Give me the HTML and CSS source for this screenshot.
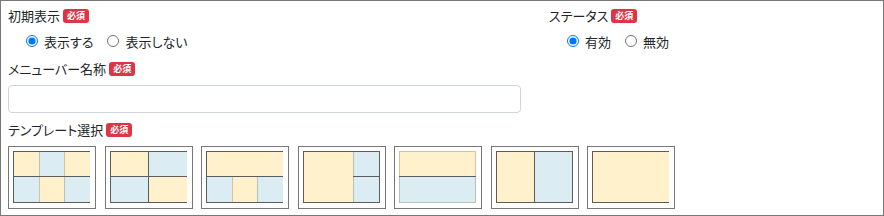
FILE: index.html
```html
<!DOCTYPE html>
<html>
<head>
    <title>メニュー設定</title>
    <link rel="stylesheet" href="styles.css">
</head>
<body>
    <div class="panel">
        <div class="top-row">
            <!-- 初期表示 -->
            <div class="field">
                <div class="label">初期表示<span class="badge">必須</span></div>
                <div class="radios">
                    <label><input type="radio" name="display" checked>表示する</label>
                    <label><input type="radio" name="display">表示しない</label>
                </div>
            </div>
            <!-- ステータス -->
            <div class="field">
                <div class="label">ステータス<span class="badge">必須</span></div>
                <div class="radios">
                    <label><input type="radio" name="status" checked>有効</label>
                    <label><input type="radio" name="status">無効</label>
                </div>
            </div>
        </div>

        <div class="label menu-label">メニューバー名称<span class="badge">必須</span></div>
        <input type="text" class="name-input">

        <div class="label template-label">テンプレート選択<span class="badge">必須</span></div>
        <div class="templates">
            <div class="template">
                <svg width="77" height="52" viewBox="0 0 77 52" shape-rendering="crispEdges">
                    <rect x="0" y="0" width="26" height="25" fill="#fff1cc"/>
                    <rect x="26" y="0" width="25" height="25" fill="#dbedf3"/>
                    <rect x="51" y="0" width="26" height="25" fill="#fff1cc"/>
                    <rect x="0" y="25" width="26" height="27" fill="#dbedf3"/>
                    <rect x="26" y="25" width="25" height="27" fill="#fff1cc"/>
                    <rect x="51" y="25" width="26" height="27" fill="#dbedf3"/>
                    <line x1="26.5" y1="0" x2="26.5" y2="52" class="soft"/>
                    <line x1="51.5" y1="0" x2="51.5" y2="52" class="soft"/>
                    <line x1="0" y1="25.5" x2="77" y2="25.5" class="hard"/>
                    <polyline points="77,0.5 0.5,0.5 0.5,51.5 77,51.5" class="hard"/>
                </svg>
            </div>
            <div class="template">
                <svg width="77" height="52" viewBox="0 0 77 52" shape-rendering="crispEdges">
                    <rect x="0" y="0" width="38" height="25" fill="#fff1cc"/>
                    <rect x="38" y="0" width="39" height="25" fill="#dbedf3"/>
                    <rect x="0" y="25" width="38" height="27" fill="#dbedf3"/>
                    <rect x="38" y="25" width="39" height="27" fill="#fff1cc"/>
                    <line x1="38.5" y1="0" x2="38.5" y2="52" class="hard"/>
                    <line x1="0" y1="25.5" x2="77" y2="25.5" class="hard"/>
                    <polyline points="77,0.5 0.5,0.5 0.5,51.5 77,51.5" class="hard"/>
                </svg>
            </div>
            <div class="template">
                <svg width="77" height="52" viewBox="0 0 77 52" shape-rendering="crispEdges">
                    <rect x="0" y="0" width="77" height="25" fill="#fff1cc"/>
                    <rect x="0" y="25" width="26" height="27" fill="#dbedf3"/>
                    <rect x="26" y="25" width="25" height="27" fill="#fff1cc"/>
                    <rect x="51" y="25" width="26" height="27" fill="#dbedf3"/>
                    <line x1="26.5" y1="25" x2="26.5" y2="52" class="soft"/>
                    <line x1="51.5" y1="25" x2="51.5" y2="52" class="soft"/>
                    <line x1="0" y1="25.5" x2="77" y2="25.5" class="hard"/>
                    <polyline points="77,0.5 0.5,0.5 0.5,51.5 77,51.5" class="hard"/>
                </svg>
            </div>
            <div class="template">
                <svg width="77" height="52" viewBox="0 0 77 52" shape-rendering="crispEdges">
                    <rect x="0" y="0" width="50" height="52" fill="#fff1cc"/>
                    <rect x="50" y="0" width="27" height="52" fill="#dbedf3"/>
                    <line x1="50.5" y1="0" x2="50.5" y2="52" class="soft"/>
                    <line x1="50" y1="25.5" x2="77" y2="25.5" class="hard"/>
                    <rect x="0.5" y="0.5" width="76" height="51" class="hard" fill="none"/>
                </svg>
            </div>
            <div class="template">
                <svg width="77" height="52" viewBox="0 0 77 52" shape-rendering="crispEdges">
                    <rect x="0" y="0" width="77" height="25" fill="#fff1cc"/>
                    <rect x="0" y="25" width="77" height="27" fill="#dbedf3"/>
                    <line x1="0" y1="25.5" x2="77" y2="25.5" class="hard"/>
                    <rect x="0.5" y="0.5" width="76" height="51" class="soft" fill="none"/>
                </svg>
            </div>
            <div class="template">
                <svg width="77" height="52" viewBox="0 0 77 52" shape-rendering="crispEdges">
                    <rect x="0" y="0" width="38" height="52" fill="#fff1cc"/>
                    <rect x="38" y="0" width="39" height="52" fill="#dbedf3"/>
                    <line x1="38.5" y1="0" x2="38.5" y2="52" class="hard"/>
                    <rect x="0.5" y="0.5" width="76" height="51" class="hard" fill="none"/>
                </svg>
            </div>
            <div class="template">
                <svg width="77" height="52" viewBox="0 0 77 52" shape-rendering="crispEdges">
                    <rect x="0" y="0" width="77" height="52" fill="#fff1cc"/>
                    <polyline points="77,0.5 0.5,0.5 0.5,51.5 77,51.5" class="hard"/>
                </svg>
            </div>
        </div>
    </div>
</body>
</html>
```

FILE: styles.css
```css
body {
    margin: 0;
    font-family: "Noto Sans CJK JP", "Noto Sans", sans-serif;
    font-size: 13px;
    font-feature-settings: "palt";
    color: #212529;
    background-color: #fff;
}

.panel {
    height: 216px;
    box-sizing: border-box;
    border: 1px solid #777;
    padding: 5px 7px 0;
}

.top-row {
    display: grid;
    grid-template-columns: 541px 1fr;
}

.label {
    display: flex;
    align-items: center;
    gap: 3px;
    height: 20px;
    line-height: 20px;
}

.badge {
    background-color: #dc3545;
    color: #fff;
    font-size: 9px;
    font-weight: bold;
    line-height: 14px;
    padding: 0 4px;
    border-radius: 3px;
    font-feature-settings: normal;
}

.radios {
    display: flex;
    align-items: center;
    gap: 14px;
    height: 20px;
    margin-top: 5px;
    padding-left: 18px;
}

.radios label {
    display: flex;
    align-items: center;
    gap: 6px;
}

.radios input {
    margin: 0;
    width: 12px;
    height: 12px;
}

.menu-label {
    margin-top: 8px;
}

.name-input {
    display: block;
    width: 513px;
    height: 28px;
    box-sizing: border-box;
    margin: 6px 0 0;
    border: 1px solid #ced4da;
    border-radius: 4px;
}

.template-label {
    margin-top: 7px;
}

.templates {
    display: flex;
    gap: 8.5px;
    margin-top: 6px;
}

.template {
    display: flex;
    border: 1px solid #777;
    padding: 4px 5px 5px 4px;
}

.template svg {
    display: block;
}

.template .hard {
    stroke: #5c5c5c;
    stroke-width: 1;
    fill: none;
}

.template .soft {
    stroke: rgba(120, 110, 80, 0.35);
    stroke-width: 1;
    fill: none;
}
```
